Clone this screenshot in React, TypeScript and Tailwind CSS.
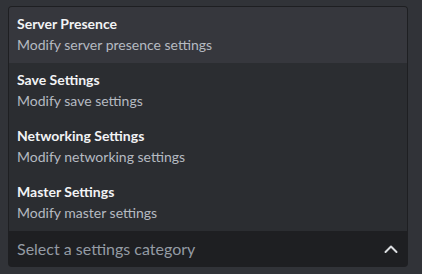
import React from 'react';

const OPTIONS = [
  { label: 'Server Presence',     description: 'Modify server presence settings' },
  { label: 'Save Settings',       description: 'Modify save settings' },
  { label: 'Networking Settings', description: 'Modify networking settings' },
  { label: 'Master Settings',     description: 'Modify master settings' },
];

const ChevronUp = () => (
  <svg width="16" height="16" viewBox="0 0 16 16" fill="none" className="text-[#dbdee1]">
    <path d="M2.5 11 L8 5.5 L13.5 11" stroke="currentColor" strokeWidth="2" strokeLinecap="round" strokeLinejoin="round" />
  </svg>
);

export default function App() {
  return (
    <div
      className="w-[422px] h-[274px] bg-[#313338] pt-[6px] pl-[8px] overflow-hidden"
      style={{ fontFamily: 'Lato, "Noto Sans", sans-serif' }}
    >
      <div className="w-[400px] flex flex-col">
        {/* Options list */}
        <div className="bg-[#2b2d31] border border-b-0 border-[#1e1f22] rounded-t-[4px] overflow-hidden">
          {OPTIONS.map((opt, i) => (
            <div
              key={opt.label}
              className={`h-14 px-2 pt-2 ${i === 0 ? 'bg-[#36373d]' : ''}`}
            >
              <div className="text-[14px] leading-[18px] font-bold text-[#f2f3f5]">{opt.label}</div>
              <div className="mt-[3px] text-[14px] leading-[18px] text-[#b5bac1]">{opt.description}</div>
            </div>
          ))}
        </div>

        {/* Select trigger */}
        <div className="h-9 bg-[#1e1f22] rounded-b-[4px] flex items-center justify-between pl-[9px] pr-[9px]">
          <span className="text-[16px] text-[#949ba4]">Select a settings category</span>
          <ChevronUp />
        </div>
      </div>
    </div>
  );
}
